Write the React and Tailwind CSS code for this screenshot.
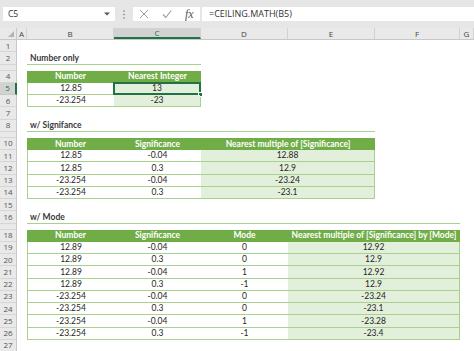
import React from 'react';

const GREEN = 'bg-[#70ad47]';
const LIGHT = 'bg-[#e2efda]';

const rows = [
  { n: 1 },
  { n: 2, title: 'Number only', span: 'w-[174px]' },
  { n: 3, small: true },
  { n: 4, head: ['Number', 'Nearest Integer'], w: ['w-[87px]', 'w-[87px]'], span: 'w-[174px]' },
  { n: 5, data: ['12.85', '13'], w: ['w-[87px]', 'w-[87px]'], span: 'w-[174px]', sel: 1 },
  { n: 6, data: ['-23.254', '-23'], w: ['w-[87px]', 'w-[87px]'], span: 'w-[174px]' },
  { n: 7 },
  { n: 8, title: 'w/ Signifance', span: 'w-[348px]' },
  { n: 9, small: true },
  { n: 10, head: ['Number', 'Significance', 'Nearest multiple of [Significance]'], w: ['w-[87px]', 'w-[87px]', 'w-[174px]'], span: 'w-[348px]' },
  { n: 11, data: ['12.85', '-0.04', '12.88'], w: ['w-[87px]', 'w-[87px]', 'w-[174px]'], span: 'w-[348px]' },
  { n: 12, data: ['12.85', '0.3', '12.9'], w: ['w-[87px]', 'w-[87px]', 'w-[174px]'], span: 'w-[348px]' },
  { n: 13, data: ['-23.254', '-0.04', '-23.24'], w: ['w-[87px]', 'w-[87px]', 'w-[174px]'], span: 'w-[348px]' },
  { n: 14, data: ['-23.254', '0.3', '-23.1'], w: ['w-[87px]', 'w-[87px]', 'w-[174px]'], span: 'w-[348px]' },
  { n: 15 },
  { n: 16, title: 'w/ Mode', span: 'w-[433px]' },
  { n: 17, small: true },
  { n: 18, head: ['Number', 'Significance', 'Mode', 'Nearest multiple of [Significance] by [Mode]'], w: ['w-[87px]', 'w-[87px]', 'w-[87px]', 'w-[172px]'], span: 'w-[433px]' },
  ...[
    ['12.89', '-0.04', '0', '12.92'],
    ['12.89', '0.3', '0', '12.9'],
    ['12.89', '-0.04', '1', '12.92'],
    ['12.89', '0.3', '-1', '12.9'],
    ['-23.254', '-0.04', '0', '-23.24'],
    ['-23.254', '0.3', '0', '-23.1'],
    ['-23.254', '-0.04', '1', '-23.28'],
    ['-23.254', '0.3', '-1', '-23.4'],
  ].map((d, i) => ({ n: 19 + i, data: d, w: ['w-[87px]', 'w-[87px]', 'w-[87px]', 'w-[172px]'], span: 'w-[433px]' })),
  { n: 27 },
];

const colHeads = [
  { l: 'A', w: 'w-[10px]' },
  { l: 'B', w: 'w-[87px]' },
  { l: 'C', w: 'w-[87px]', sel: true },
  { l: 'D', w: 'w-[87px]' },
  { l: 'E', w: 'w-[87px]' },
  { l: 'F', w: 'w-[85px]' },
  { l: 'G', w: 'flex-1' },
];

const FormulaBar = () => (
  <div className="h-[28px] bg-[#e6e6e6] flex pt-[7px] font-['Open_Sans',sans-serif]">
    <div className="ml-[3px] w-[112px] h-[14px] bg-white flex items-center justify-between pl-[5px] pr-[5px]">
      <span className="text-[8.5px] text-[#333]">C5</span>
      <svg width="6" height="4" viewBox="0 0 6 4"><path d="M0 0.5h6L3 3.5z" fill="#555" /></svg>
    </div>
    <div className="w-[18px] h-[14px] flex justify-center items-center">
      <svg width="2" height="9" viewBox="0 0 2 9">
        <circle cx="1" cy="1" r="0.8" fill="#777" />
        <circle cx="1" cy="4.5" r="0.8" fill="#777" />
        <circle cx="1" cy="8" r="0.8" fill="#777" />
      </svg>
    </div>
    <div className="w-[67px] h-[14px] bg-white flex items-center pl-[6px] gap-[13px]">
      <svg width="10" height="10" viewBox="0 0 10 10"><path d="M1 1L9 9M9 1L1 9" stroke="#9a9a9a" strokeWidth="1" /></svg>
      <svg width="10" height="10" viewBox="0 0 10 10"><path d="M1 5.5L3.8 8.5L9.2 1.5" stroke="#9a9a9a" strokeWidth="1.1" fill="none" /></svg>
      <span className="font-['Liberation_Serif',serif] italic text-[12px] leading-none text-[#555]">fx</span>
    </div>
    <div className="ml-[2px] flex-1 h-[14px] bg-white pl-[7px] text-[9px] text-[#333] flex items-center">=CEILING.MATH(B5)</div>
  </div>
);

const ColumnHeader = () => (
  <div className="flex h-[12px] bg-[#e9e9e9] border-b border-[#c8c8c8] font-['Open_Sans',sans-serif] text-[8px]">
    <div className="w-[17px] border-r border-[#c8c8c8] flex items-end justify-end pr-[2px] pb-[2px]">
      <svg width="6" height="6" viewBox="0 0 6 6"><path d="M6 0V6H0z" fill="#b4b4b4" /></svg>
    </div>
    {colHeads.map((c) => (
      <div
        key={c.l}
        className={`${c.w} flex items-center justify-center border-r border-[#d2d2d2] ${
          c.sel ? 'bg-[#d2d2d2] text-[#217346] border-b-2 border-b-[#217346]' : 'text-[#444]'
        }`}
      >
        {c.l}
      </div>
    ))}
  </div>
);

const RowBody = ({ r }) => {
  if (r.title) {
    return (
      <div className={`${r.span} border-b border-[#a9d08e] flex items-end pl-[3px] pb-[1px] text-[8.5px] font-bold text-[#3a3a3a] leading-none`}>
        {r.title}
      </div>
    );
  }
  if (r.head) {
    return (
      <div className={`${r.span} ${GREEN} flex`}>
        {r.head.map((h, i) => (
          <div key={i} className={`${r.w[i]} flex items-center justify-center text-white font-bold text-[8.5px] whitespace-nowrap`}>
            {h}
          </div>
        ))}
      </div>
    );
  }
  if (r.data) {
    const last = r.data.length - 1;
    return (
      <div className={`${r.span} flex border-x border-b border-[#a9d08e]`}>
        {r.data.map((d, i) => (
          <div
            key={i}
            className={`${i === 0 ? 'w-[86px]' : i === last ? 'flex-1' : r.w[i]} ${i === last ? LIGHT : 'bg-white'} relative flex items-center justify-center text-[8.5px] text-[#262626]`}
          >
            {d}
            {r.sel === i && (
              <>
                <div className="absolute -top-[1px] -left-[1px] -right-[1px] -bottom-[1px] border-2 border-[#217346]" />
                <div className="absolute -right-[3px] -bottom-[3px] w-[5px] h-[5px] bg-[#217346] border border-white" />
              </>
            )}
          </div>
        ))}
      </div>
    );
  }
  return null;
};

export default function App() {
  return (
    <div className="w-[474px] h-[351px] overflow-hidden bg-white font-['Lato',sans-serif]">
      <FormulaBar />
      <ColumnHeader />
      {rows.map((r) => (
        <div key={r.n} className={`flex ${r.small ? 'h-[6px]' : 'h-[12.25px]'}`}>
          <div
            className={`w-[17px] shrink-0 flex items-center justify-center border-b font-['Open_Sans',sans-serif] text-[8px] leading-none ${
              r.sel !== undefined
                ? 'bg-[#d2d2d2] text-[#217346] border-r-2 border-r-[#217346] border-b-[#c8c8c8]'
                : 'bg-[#e9e9e9] text-[#555] border-r border-r-[#c8c8c8] border-b-[#d6d6d6]'
            }`}
          >
            {r.small ? '' : r.n}
          </div>
          <div className="w-[10px] shrink-0" />
          <RowBody r={r} />
        </div>
      ))}
    </div>
  );
}
